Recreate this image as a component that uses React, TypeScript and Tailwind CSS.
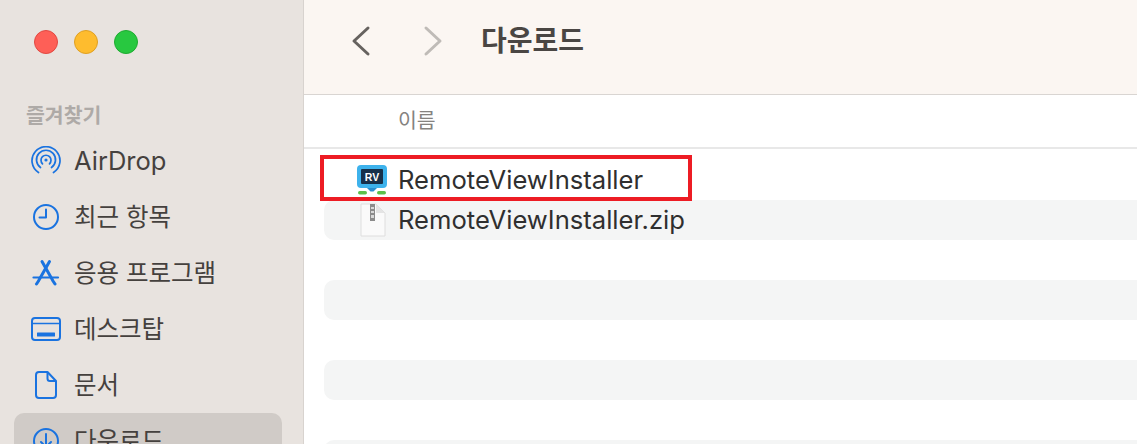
const FONT = "font-['Inter','Noto_Sans_CJK_KR',sans-serif]";

const AirDropIcon = () => (
  <svg width="30" height="30" viewBox="0 0 30 30" fill="none" stroke="#1a73e0" strokeWidth="1.7" strokeLinecap="round">
    <path d="M7.5 26.5 A14 14 0 1 1 22.5 26.5" />
    <path d="M9.5 21.5 A9.5 9.5 0 1 1 20.5 21.5" />
    <path d="M11.5 17.8 A5 5 0 1 1 18.5 17.8" />
    <circle cx="15" cy="14" r="1.6" fill="#1a73e0" stroke="none" />
  </svg>
);

const ClockIcon = () => (
  <svg width="28" height="28" viewBox="0 0 28 28" fill="none" stroke="#1a73e0" strokeWidth="2" strokeLinecap="round" strokeLinejoin="round">
    <circle cx="14" cy="14" r="12" />
    <path d="M14 6.5 V14.5 H7.5" />
  </svg>
);

const AppsIcon = () => (
  <svg width="30" height="28" viewBox="0 0 30 28" fill="none" stroke="#1a73e0" strokeLinecap="round">
    <path d="M11 2.5 L21.5 21" strokeWidth="3" />
    <path d="M18.5 2.5 L8 21" strokeWidth="3" />
    <path d="M2.5 18.5 H27" strokeWidth="2.2" />
    <path d="M5.5 25 L7.5 22" strokeWidth="3" />
    <path d="M24 25 L22 22" strokeWidth="3" />
  </svg>
);

const DesktopIcon = () => (
  <svg width="30" height="24" viewBox="0 0 30 24" fill="none">
    <rect x="1" y="1" width="28" height="22" rx="3" stroke="#1a73e0" strokeWidth="2" />
    <path d="M1.5 6.5 H28.5" stroke="#1a73e0" strokeWidth="1.5" />
    <rect x="6" y="15.5" width="18" height="4" rx="0.5" fill="#1a73e0" />
  </svg>
);

const DocIcon = () => (
  <svg width="22" height="28" viewBox="0 0 22 28" fill="none" stroke="#1a73e0" strokeWidth="2" strokeLinejoin="round">
    <path d="M4 1 H12.5 L21 10 V24 A3 3 0 0 1 18 27 H4 A3 3 0 0 1 1 24 V4 A3 3 0 0 1 4 1 Z" />
    <path d="M12.5 1 V7.5 A2.5 2.5 0 0 0 15 10 H21" />
  </svg>
);

const DownloadIcon = () => (
  <svg width="28" height="28" viewBox="0 0 28 28" fill="none" stroke="#1a73e0" strokeWidth="2" strokeLinecap="round" strokeLinejoin="round">
    <circle cx="14" cy="14" r="12" />
    <path d="M14 7 V20 M9 15 L14 20 L19 15" />
  </svg>
);

const RvIcon = () => (
  <svg width="32" height="32" viewBox="0 0 32 32" className="shrink-0">
    <rect x="1" y="1" width="30" height="23" rx="4" fill="#3db2ec" />
    <path d="M11 24 H21 L17.5 27.5 H14.5 Z" fill="#2a8fd0" />
    <rect x="5" y="5" width="22" height="15" rx="1" fill="#17304a" />
    <rect x="2" y="27" width="9" height="3.5" rx="1.7" fill="#5cc04a" />
    <rect x="21" y="27" width="9" height="3.5" rx="1.7" fill="#5cc04a" />
    <text x="16" y="16.5" textAnchor="middle" fontSize="10.5" fontWeight="700" fill="#ffffff" fontFamily="Liberation Sans, sans-serif">RV</text>
  </svg>
);

const ZipIcon = () => (
  <svg width="26" height="34" viewBox="0 0 26 34" className="shrink-0">
    <path d="M1 1 H16 L25 10 V33 H1 Z" fill="#fafafa" stroke="#dedede" strokeWidth="1" />
    <path d="M16 1 V10 H25 Z" fill="#e4e4e4" />
    <rect x="10" y="1" width="5" height="17" fill="#8b8b8b" />
    <rect x="11" y="4" width="3" height="2" fill="#d8d8d8" />
    <rect x="11" y="8" width="3" height="2" fill="#d8d8d8" />
    <rect x="11" y="12" width="3" height="3" fill="#d8d8d8" />
  </svg>
);

const NAV = [
  { label: "AirDrop", icon: <AirDropIcon />, size: "text-[25.5px]" },
  { label: "최근 항목", icon: <ClockIcon />, size: "text-[24.5px]" },
  { label: "응용 프로그램", icon: <AppsIcon />, size: "text-[24.5px]" },
  { label: "데스크탑", icon: <DesktopIcon />, size: "text-[24.5px]" },
  { label: "문서", icon: <DocIcon />, size: "text-[24.5px]" },
  { label: "다운로드", icon: <DownloadIcon />, size: "text-[24.5px]", active: true },
];

const Sidebar = () => (
  <aside className="w-[304px] h-full shrink-0 bg-[#e8e3df] border-r-[1px] border-[#d8d3cf] pl-[14px] pr-[21px]">
    <div className="flex gap-4 pl-5 pt-[30px]">
      <span className="w-6 h-6 rounded-full bg-[#fe5f57] border border-[#e14942]" />
      <span className="w-6 h-6 rounded-full bg-[#febc2e] border border-[#dfa023]" />
      <span className="w-6 h-6 rounded-full bg-[#28c840] border border-[#1fab31]" />
    </div>
    <div className="mt-[49px] pl-3 h-[26px] leading-[26px] text-[20.5px] font-semibold text-[#aeaaa7]">즐겨찾기</div>
    <nav className="mt-[4px]">
      {NAV.map((item) => (
        <div
          key={item.label}
          className={`flex items-center h-[56px] rounded-[10px] text-[#45413e] ${item.size} ${item.active ? "bg-[#d0cbc7]" : ""}`}
        >
          <span className="w-[60px] flex justify-center shrink-0 pl-[4px]">{item.icon}</span>
          <span>{item.label}</span>
        </div>
      ))}
    </nav>
  </aside>
);

const Toolbar = () => (
  <header className="h-[95px] bg-[#fbf6f2] border-b border-[#d9d5d2] flex items-center pl-[47px] pb-[12px]">
    <svg width="20" height="32" viewBox="0 0 20 32" fill="none" stroke="#66625f" strokeWidth="3" strokeLinecap="round" strokeLinejoin="round">
      <path d="M17 3 L3 16 L17 29" />
    </svg>
    <svg width="20" height="32" viewBox="0 0 20 32" fill="none" stroke="#bfbbb7" strokeWidth="3" strokeLinecap="round" strokeLinejoin="round" className="ml-[52px]">
      <path d="M3 3 L17 16 L3 29" />
    </svg>
    <h1 className="ml-[38px] text-[28px] font-semibold text-[#4a4643]">다운로드</h1>
  </header>
);

const FileRow = ({ name, icon, striped, iconPad = "pr-[10px]" }: { name: string; icon: React.ReactNode; striped?: boolean; iconPad?: string }) => (
  <div className={`h-10 ml-5 flex items-center rounded-l-[10px] ${striped ? "bg-[#f4f5f5]" : ""}`}>
    <span className={`w-[74px] flex justify-end ${iconPad}`}>{icon}</span>
    <span className="text-[25.6px] text-[#2f2f2f]">{name}</span>
  </div>
);

const App = () => (
  <div className={`w-[1137px] h-[444px] overflow-hidden flex bg-white ${FONT}`}>
    <Sidebar />
    <main className="flex-1 min-w-0 relative">
      <Toolbar />
      <div className="h-[54px] border-b-2 border-[#e8e8e8] flex items-center pl-[94px] text-[20.5px] text-[#85827f]">이름</div>
      <div className="pt-[11px]">
        <FileRow name="RemoteViewInstaller" icon={<RvIcon />} />
        <FileRow name="RemoteViewInstaller.zip" icon={<ZipIcon />} striped iconPad="pr-[12px]" />
        <FileRow name="" icon={null} />
        <FileRow name="" icon={null} striped />
        <FileRow name="" icon={null} />
        <FileRow name="" icon={null} striped />
        <FileRow name="" icon={null} />
        <FileRow name="" icon={null} striped />
      </div>
      {/* red highlight drawn over the first row */}
      <div className="absolute left-[16px] top-[155px] w-[372px] h-[46px] border-4 border-[#ed1c24]" />
    </main>
  </div>
);

export default App;
